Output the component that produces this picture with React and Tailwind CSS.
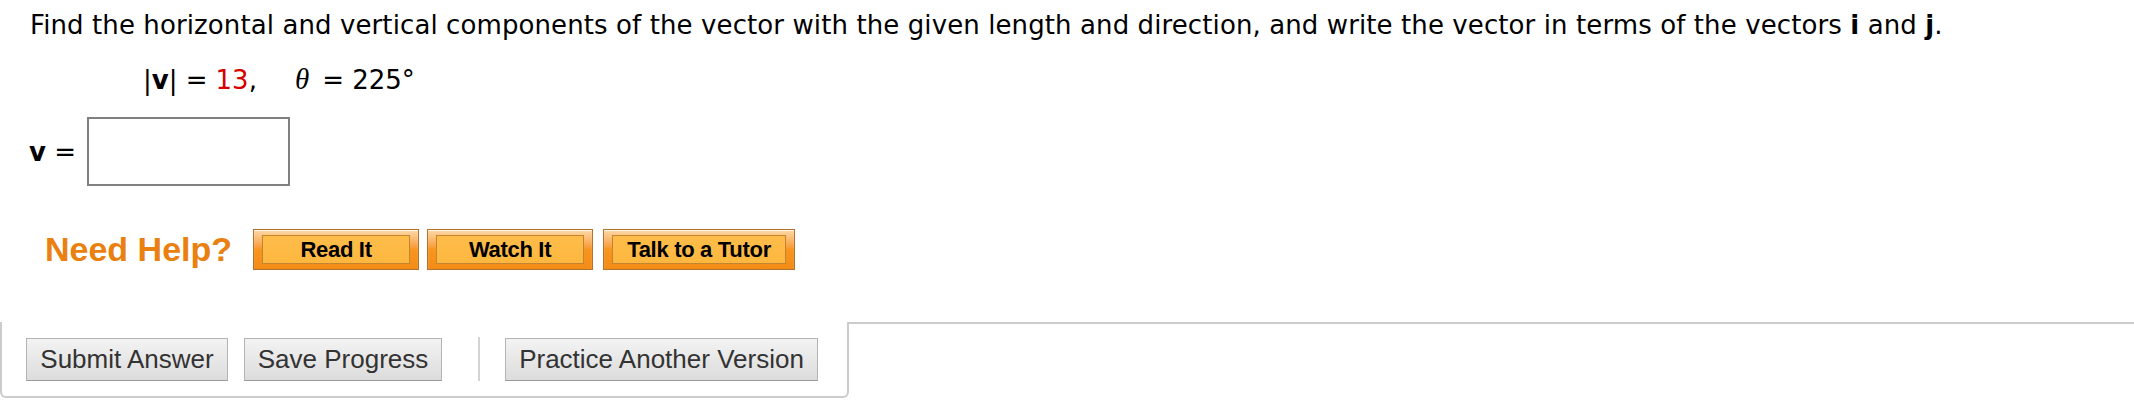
const HelpButton = ({ label, className = '' }) => (
    <div className={`h-[41px] border border-[#b0722c] bg-gradient-to-b from-[#fcd9a6] via-[#f7951f] to-[#f28c17] px-[8px] py-[5px] shadow-[inset_0_1px_1px_rgba(255,255,255,0.8)] ${className}`}>
        <div className="flex h-full items-center justify-center whitespace-nowrap border border-[#c3852f] bg-gradient-to-b from-[#fdbd4a] to-[#fdb73f] font-['Liberation_Sans',Arial,sans-serif] text-[22px] font-bold tracking-[-0.3px] text-black">
            {label}
        </div>
    </div>
);

const GrayButton = ({ label, className = '' }) => (
    <div className={`flex h-[43px] items-center justify-center whitespace-nowrap border border-[#b4b4b4] border-b-[#999999] bg-gradient-to-b from-[#f3f3f3] to-[#dcdcdc] font-['Liberation_Sans',Arial,sans-serif] text-[26px] text-[#333333] ${className}`}>
        {label}
    </div>
);

export default function App() {
    return (
        <div className="min-h-[414px] w-[2134px] bg-white font-['DejaVu_Sans',Verdana,sans-serif] text-black">
            <p className="pl-[30px] pt-[9px] text-[26px] leading-[32px] tracking-[0.1px]">
                Find the horizontal and vertical components of the vector with the given length and direction, and write the vector in terms of the vectors <b>i</b> and <b>j</b>.
            </p>

            <div className="mt-[22px] flex items-baseline pl-[143px] text-[26px] leading-[32px]">
                <span>|<b>v</b>| = </span>
                <span className="ml-[8px] text-[#d60000]">13</span>
                <span>,</span>
                <span className="ml-[38px] font-['Liberation_Serif',serif] text-[29px] italic">θ</span>
                <span className="ml-[13px]">= 225°</span>
            </div>

            <div className="mt-[21px] flex items-center pl-[29px]">
                <span className="text-[26px] leading-[32px]">
                    <b>v</b> =
                </span>
                <div className="ml-[11px] h-[69px] w-[203px] border-2 border-[#808080] bg-white" />
            </div>

            <div className="mt-[43px] flex items-center pl-[45px]">
                <span className="font-['Liberation_Sans',Arial,sans-serif] text-[34px] font-bold leading-[41px] text-[#e98010]">
                    Need Help?
                </span>
                <HelpButton label="Read It" className="ml-[21px] w-[166px]" />
                <HelpButton label="Watch It" className="ml-[8px] w-[166px]" />
                <HelpButton label="Talk to a Tutor" className="ml-[10px] w-[192px]" />
            </div>

            <div className="mt-[52px] flex">
                <div className="flex w-[849px] items-center rounded-b-[6px] border-2 border-t-0 border-[#cccccc] pb-[15px] pl-[24px] pt-[15px]">
                    <GrayButton label="Submit Answer" className="w-[202px]" />
                    <GrayButton label="Save Progress" className="ml-[16px] w-[198px]" />
                    <div className="ml-[36px] h-[44px] w-[2px] bg-[#d4d4d4]" />
                    <GrayButton label="Practice Another Version" className="ml-[25px] w-[313px]" />
                </div>
                <div className="flex-1 border-t-2 border-[#cccccc]" />
            </div>
        </div>
    );
}
